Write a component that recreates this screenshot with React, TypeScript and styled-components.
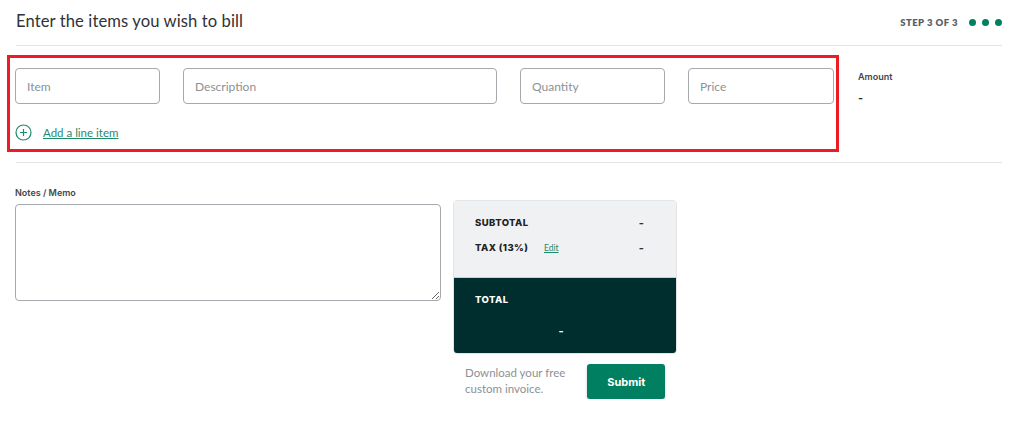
import React from 'react'
import styled, { createGlobalStyle } from 'styled-components'

const GlobalStyle = createGlobalStyle`
  body {
    margin: 0;
    background: #ffffff;
    font-family: Inter, 'Noto Sans', sans-serif;
    color: #202223;
  }
`

const Page = styled.div`
  width: 986px;
  margin-left: 16px;
`
const Header = styled.div`
  height: 45px;
  display: flex;
  align-items: flex-start;
  justify-content: space-between;
  border-bottom: 1px solid #e1e3e5;
`
const Title = styled.h1`
  margin: 11px 0 0 0;
  font-family: Lato, 'Noto Sans', sans-serif;
  font-size: 16.6px;
  font-weight: 400;
  letter-spacing: 0.1px;
  color: #303236;
`
const Step = styled.div`
  margin-top: 17px;
  display: flex;
  align-items: center;
  gap: 11px;
  font-family: Lato, 'Noto Sans', sans-serif;
  font-size: 9.5px;
  font-weight: 800;
  letter-spacing: 0.45px;
  color: #5c5f62;
`
const Dots = styled.div`
  display: flex;
  gap: 6px;
`
const Dot = styled.span`
  width: 7px;
  height: 7px;
  border-radius: 50%;
  background: #008060;
`
const ItemsRow = styled.div`
  display: flex;
  border-bottom: 1px solid #e1e3e5;
  padding: 9px 0 10px 0;
`
const LineItems = styled.div`
  width: 819px;
  margin-left: -9px;
  border: 3px solid #ed1c24;
  padding: 10px 2px 0 5px;
  height: 81px;
`
const Fields = styled.div`
  display: grid;
  grid-template-columns: 145px 314px 145px 146px;
  gap: 23px;
`
const Field = styled.input`
  box-sizing: border-box;
  height: 36px;
  border: 1px solid #a6a9ad;
  border-radius: 4px;
  padding: 0 11px;
  font-family: Lato, 'Noto Sans', sans-serif;
  font-size: 12px;
  color: #303236;
  &::placeholder {
    color: #8c9196;
  }
`
const AddLine = styled.a`
  display: inline-flex;
  align-items: center;
  gap: 11px;
  margin-top: 20px;
  font-family: Lato, 'Noto Sans', sans-serif;
  font-size: 11.5px;
  color: #1f8a6b;
  text-decoration: underline;
  cursor: pointer;
`
const AmountCol = styled.div`
  margin-left: 19px;
  padding-top: 16px;
`
const SmallLabel = styled.div`
  font-size: 9px;
  font-weight: 600;
  color: #44474a;
`
const Dash = styled.div<{ $light?: boolean }>`
  font-size: 11px;
  font-weight: 700;
  color: ${p => (p.$light ? '#ffffff' : '#303236')};
`
const Bottom = styled.div`
  display: flex;
  gap: 12px;
  padding-top: 24px;
`
const NotesCol = styled.div`
  display: flex;
  flex-direction: column;
  gap: 6px;
  margin-left: -1px;
`
const Notes = styled.textarea`
  box-sizing: border-box;
  width: 426px;
  height: 97px;
  border: 1px solid #a6a9ad;
  border-radius: 4px;
`
const SummaryCol = styled.div`
  margin-top: 13px;
  width: 224px;
`
const Summary = styled.div`
  border-radius: 4px;
  overflow: hidden;
  border: 1px solid #e4e5e7;
`
const SummaryTop = styled.div`
  background: #f0f1f3;
  height: 77px;
  padding: 9px 32px 0 21px;
  box-sizing: border-box;
  border-bottom: 1px solid #c9cccf;
`
const SummaryLine = styled.div`
  display: flex;
  align-items: center;
  height: 25px;
`
const SumLabel = styled.span<{ $light?: boolean }>`
  font-size: 9.5px;
  font-weight: 800;
  letter-spacing: 0.4px;
  color: ${p => (p.$light ? '#ffffff' : '#202223')};
  width: 69px;
`
const EditLink = styled.a`
  font-family: Lato, 'Noto Sans', sans-serif;
  font-size: 8.5px;
  color: #1f8a6b;
  text-decoration: underline;
  flex: 1;
`
const SummaryTotal = styled.div`
  background: #002e2e;
  height: 75px;
  padding: 9px 21px 0 21px;
  box-sizing: border-box;
`
const TotalValue = styled.div`
  text-align: center;
  margin-top: 17px;
  margin-right: 8px;
`
const Footer = styled.div`
  display: flex;
  align-items: flex-start;
  gap: 22px;
  padding: 10px 0 0 12px;
`
const Hint = styled.div`
  font-family: Lato, 'Noto Sans', sans-serif;
  font-size: 11.5px;
  line-height: 16px;
  color: #8c9196;
  margin-top: 1px;
`
const Submit = styled.button`
  width: 78px;
  height: 35px;
  border: none;
  border-radius: 3px;
  background: #008060;
  color: #ffffff;
  font-family: Inter, 'Noto Sans', sans-serif;
  font-size: 11px;
  font-weight: 700;
  box-shadow: 0 2px 3px rgba(0, 0, 0, 0.2);
`

const PlusCircle: React.FC = () => (
  <svg width='17' height='17' viewBox='0 0 17 17' fill='none' stroke='#1f8a6b' strokeWidth='1.2'>
    <circle cx='8.5' cy='8.5' r='7.5' />
    <path d='M8.5 5v7M5 8.5h7' />
  </svg>
)

const App: React.FC = () => (
  <Page>
    <GlobalStyle />
    <Header>
      <Title>Enter the items you wish to bill</Title>
      <Step>
        STEP 3 OF 3
        <Dots>
          <Dot />
          <Dot />
          <Dot />
        </Dots>
      </Step>
    </Header>
    <ItemsRow>
      <LineItems>
        <Fields>
          <Field placeholder='Item' />
          <Field placeholder='Description' />
          <Field placeholder='Quantity' />
          <Field placeholder='Price' />
        </Fields>
        <AddLine>
          <PlusCircle />
          Add a line item
        </AddLine>
      </LineItems>
      <AmountCol>
        <SmallLabel>Amount</SmallLabel>
        <Dash style={{ marginTop: 9 }}>-</Dash>
      </AmountCol>
    </ItemsRow>
    <Bottom>
      <NotesCol>
        <SmallLabel>Notes / Memo</SmallLabel>
        <Notes />
      </NotesCol>
      <SummaryCol>
        <Summary>
          <SummaryTop>
            <SummaryLine>
              <SumLabel>SUBTOTAL</SumLabel>
              <EditLink />
              <Dash>-</Dash>
            </SummaryLine>
            <SummaryLine>
              <SumLabel>TAX (13%)</SumLabel>
              <EditLink>Edit</EditLink>
              <Dash>-</Dash>
            </SummaryLine>
          </SummaryTop>
          <SummaryTotal>
            <SumLabel $light>TOTAL</SumLabel>
            <TotalValue>
              <Dash $light>-</Dash>
            </TotalValue>
          </SummaryTotal>
        </Summary>
        <Footer>
          <Hint>
            Download your free
            <br />
            custom invoice.
          </Hint>
          <Submit type='button'>Submit</Submit>
        </Footer>
      </SummaryCol>
    </Bottom>
  </Page>
)

export default App
